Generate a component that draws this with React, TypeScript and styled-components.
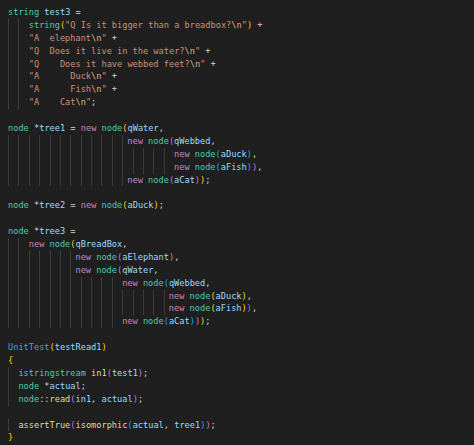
import React from "react";
import styled, { createGlobalStyle } from "styled-components";

const GlobalStyle = createGlobalStyle`
  html, body {
    margin: 0;
    padding: 0;
    background: #1f1f1f;
  }
`;

const SOURCE = String.raw`string test3 =
    string("Q Is it bigger than a breadbox?\n") +
    "A  elephant\n" +
    "Q  Does it live in the water?\n" +
    "Q    Does it have webbed feet?\n" +
    "A      Duck\n" +
    "A      Fish\n" +
    "A    Cat\n";

node *tree1 = new node(qWater,
                       new node(qWebbed,
                                new node(aDuck),
                                new node(aFish)),
                       new node(aCat));

node *tree2 = new node(aDuck);

node *tree3 =
    new node(qBreadBox,
             new node(aElephant),
             new node(qWater,
                      new node(qWebbed,
                               new node(aDuck),
                               new node(aFish)),
                      new node(aCat)));

UnitTest(testRead1)
{
  istringstream in1(test1);
  node *actual;
  node::read(in1, actual);

  assertTrue(isomorphic(actual, tree1));
}`;

const C = {
  plain: "#d4d4d4",
  type: "#4ec9b0",
  variable: "#9cdcfe",
  keyword: "#c586c0",
  func: "#dcdcaa",
  macro: "#569cd6",
  string: "#ce9178",
  escape: "#d7ba7d",
};

const BRACKETS = ["#ffd700", "#da70d6", "#179fff"];
const TYPES = new Set(["string", "node", "istringstream"]);
const MACROS = new Set(["UnitTest"]);

type Token = { text: string; color: string };
type Row = { indent: number; tokens: Token[] };

function tokenize(src: string): Row[] {
  let depth = 0;
  return src.split("\n").map((line) => {
    const indent = line.length - line.trimStart().length;
    const body = line.slice(indent);
    const tokens: Token[] = [];
    const re = /"(?:[^"\\]|\\.)*"|[A-Za-z_]\w*|\s+|::|./g;
    let m: RegExpExecArray | null;
    while ((m = re.exec(body))) {
      const t = m[0];
      if (t[0] === '"') {
        t.split(/(\\.)/).forEach((part) => {
          if (part) tokens.push({ text: part, color: part[0] === "\\" ? C.escape : C.string });
        });
      } else if (/^[A-Za-z_]/.test(t)) {
        const next = body.slice(re.lastIndex).trimStart()[0];
        let color = C.variable;
        if (t === "new") color = C.keyword;
        else if (TYPES.has(t)) color = C.type;
        else if (MACROS.has(t)) color = C.macro;
        else if (next === "(") color = C.func;
        tokens.push({ text: t, color });
      } else if (t === "(" || t === "{") {
        tokens.push({ text: t, color: BRACKETS[depth % 3] });
        depth++;
      } else if (t === ")" || t === "}") {
        depth--;
        tokens.push({ text: t, color: BRACKETS[depth % 3] });
      } else {
        tokens.push({ text: t, color: C.plain });
      }
    }
    return { indent, tokens };
  });
}

const Editor = styled.div`
  padding: 6px 0 0 8px;
  font-family: "DejaVu Sans Mono", "Liberation Mono", monospace;
  font-size: 8.64px;
  color: #d4d4d4;
`;

const Line = styled.div`
  height: 12.9px;
  line-height: 12.9px;
  white-space: pre;
`;

const Guide = styled.span<{ $w: number }>`
  display: inline-block;
  width: ${({ $w }) => $w}ch;
  height: 12.9px;
  vertical-align: top;
  box-shadow: inset 1px 0 0 #3c3c3c;
`;

const Tok = styled.span<{ $c: string }>`
  color: ${({ $c }) => $c};
`;

const rows = tokenize(SOURCE);

const App: React.FC = () => {
  return (
    <>
      <GlobalStyle />
      <Editor>
        {rows.map((row, i) => (
          <Line key={i}>
            {Array.from({ length: Math.ceil(row.indent / 2) }, (_, g) => (
              <Guide key={g} $w={Math.min(2, row.indent - g * 2)} />
            ))}
            {row.tokens.map((t, j) => (
              <Tok key={j} $c={t.color}>
                {t.text}
              </Tok>
            ))}
          </Line>
        ))}
      </Editor>
    </>
  );
};

export default App;
